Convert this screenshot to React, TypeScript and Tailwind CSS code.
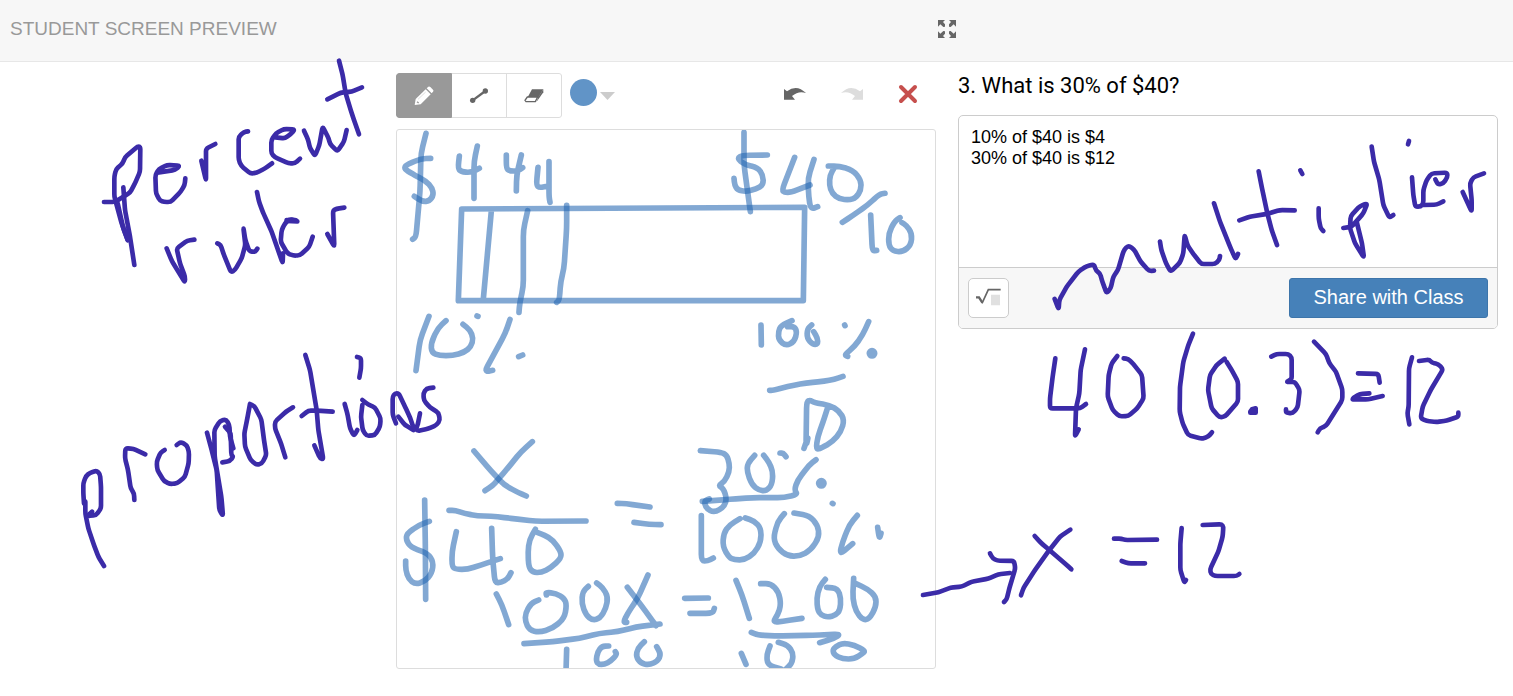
import { useState } from "react";

type Note = {
  x: number;
  y: number;
  strokes: string[];
};

// stroke points are stored at 3x resolution, relative to the corner of each note
const studentNotes: Note[] = [
  {
    x: 396,
    y: 125,
    strokes: [
      "M104 100 75 101 30 120 25 130 40 142 90 168 108 188 113 210 100 228 80 230 55 214",
      "M90 25 75 85 72 200 60 335 50 343",
      "M190 93 186 130 195 140 225 143 250 130M244 63 234 110 234 220",
      "M331 90 331 130 340 138 365 138 380 128M376 90 362 150 361 198",
      "M426 127 421 180 430 188 453 184M459 110 459 215 462 232",
      "M197 252 1226 247 1222 527 187 527ZM286 258 262 522",
      "M395 257 382 315 382 485 371 535 369 562",
      "M512 241 512 310 504 430 494 470 490 525 482 532",
      "M99 574 72 645 60 737",
      "M150 587 125 610 105 655 107 683 130 692 170 692 205 682 225 665 232 640 222 615 201 598",
      "M243 573 246 574",
      "M342 583 328 625 265 741 290 736",
      "M368 695 380 690",
    ],
  },
  {
    x: 666,
    y: 125,
    strokes: [
      "M304 90 230 91 213 100 235 118 275 128 291 150 292 180 270 192 240 200 215 195 206 180 204 160",
      "M234 22 234 120 253 260",
      "M386 97 348 195 355 202 375 202 432 180",
      "M444 103 426 160 428 215 434 253 455 245",
      "M487 123 520 124 560 135 585 165 585 195 570 218 550 225 520 222 498 205 490 180 492 150 505 128",
      "M657 205 640 208 605 240 560 272 529 292",
      "M614 270 619 378 632 376",
      "M702 278 685 290 668 325 668 360 680 378 710 381 735 360 738 325 720 300 708 293",
      "M285 600 286 660",
      "M378 587 345 602 337 620 338 645 360 663 385 650 393 620 385 605 365 605",
      "M437 600 424 612 423 640 440 658 455 658 455 640 443 620",
      "M536 600 537 602",
      "M608 590 590 630 565 665 535 690 545 694",
      "M610 685a8 8 0 1 0 16 0a8 8 0 1 0-16 0",
    ],
  },
  {
    x: 396,
    y: 385,
    strokes: [
      "M234 198 285 258 325 300 365 322 391 333",
      "M409 170 375 200 335 250 305 285 290 302 267 317",
      "M159 376 178 376 205 385 245 393 285 393 345 400 420 409 570 408",
      "M664 355 690 356 762 366",
      "M714 412 760 418 795 419",
      "M100 409 70 420 33 445 30 465 45 487 95 505 112 530 108 565 85 590 58 598 38 582 29 555 29 528",
      "M86 345 88 480 89 643",
      "M181 440 168 500 168 545 180 553 215 553 255 540 313 521M287 430 290 520 297 594 315 592 335 582 345 563",
      "M418 433 400 465 396 500 398 545 410 562 435 563 465 548 495 520 495 500 470 465 445 450 425 443",
      "M301 627 318 660 338 719",
      "M428 645 405 655 388 685 388 710 400 735 430 742 470 730 505 700 512 660 505 640 480 625 450 622 451 630",
      "M577 604 560 620 557 655 570 690 590 706 612 700 630 670 636 635 620 608 602 594",
      "M756 570 725 640 695 685 682 712 692 712",
      "M694 607 735 660 780 722M384 776 470 770 550 760 610 745 665 740 720 726 792 717",
      "M512 793 510 860",
      "M638 783 618 784 605 800 600 828 608 838 625 838 645 828 663 808 658 800",
      "M745 770 725 790 720 815 735 835 760 840 785 828 795 808 782 785",
    ],
  },
  {
    x: 666,
    y: 365,
    strokes: [
      "M311 76 320 76 385 60 420 54 475 49 505 43 531 34",
      "M414 250 428 210 420 245 422 110 432 105 445 113 490 120 520 138 535 165 525 200 500 230 465 250 450 253 455 215 470 175 485 128",
      "M103 257 165 262 182 270 190 295 190 320 175 350 157 362 172 370 182 400 175 425 145 443 120 430 115 408 130 402",
      "M109 409 190 403 260 398 355 398 395 388 385 375 395 345 430 300 450 284",
      "M266 271 245 295 243 320 258 360 280 376 300 378 318 360 321 320 308 290 293 271",
      "M342 264 352 265 360 275",
      "M458 355a8 8 0 1 0 16 0a8 8 0 1 0-16 0",
      "M499 415 501 416",
      "M106 452 106 588 125 588 142 579",
      "M222 461 190 480 173 505 170 545 190 578 205 584 235 585 265 565 285 530 285 490 265 468 238 459",
      "M355 446 335 470 322 520 335 550 365 573 400 574 435 555 460 515 455 480 430 452 384 444",
      "M574 451 550 480 530 530 520 570 560 536",
      "M635 487 640 522 645 505",
      "M56 700 127 699",
      "M72 745 140 745 145 730",
      "M210 646 228 690 250 760",
      "M284 656 315 656 338 680 345 720 335 750 320 772 350 769 408 760",
      "M478 643 460 665 452 700 455 735 465 750 485 757 510 750 522 735 525 700 515 670 482 667",
      "M563 640 560 700 570 740 590 765 610 762 630 725 630 695 605 672 568 655",
      "M256 802 275 810 330 813 440 811 524 807 505 820 461 833",
      "M226 865 240 898",
      "M312 843 302 870 305 900 345 912",
      "M337 832 365 840 382 865 378 895 360 912",
      "M510 845 500 855 505 870 530 882 565 882 590 865 598 858 565 840 530 834 510 845",
    ],
  },
];

const teacherNotes: Note[] = [
  {
    x: 80,
    y: 50,
    strokes: [
      "M72 456 105 456 150 428 165 400 180 365 181 290 172 290 135 322 128 340 108 358 103 380 103 440 125 520 143 570",
      "M130 412 135 480 150 560 163 645M113 460 130 535 143 570",
      "M232 368 285 360 300 347 262 345 237 357 226 375 228 430 240 452 252 456 272 456 302 425 314 405 316 385",
      "M364 332 378 392 378 296 406 282",
      "M504 244 492 246 476 260 476 330 484 348 512 371 530 368 556 355 576 340",
      "M586 262 615 265 632 252 645 238 612 237 588 250 574 270 574 310 585 322 625 340 645 340 660 326",
      "M672 242 684 268 690 294 705 318 718 285 728 230 746 265 750 282 772 304 792 275 800 240",
      "M777 32 788 75 797 130 812 180 822 210 837 253",
      "M742 148 782 128 815 125 846 112",
      "M260 595 275 632 315 698 315 680 300 640 290 595 322 572 343 569",
      "M412 580 422 585 430 610 453 667 465 660 485 625 496 585 490 532 496 570 508 604 525 606 532 596",
      "M531 426 537 455 548 485 575 545 608 640 609 610",
      "M620 510 652 511 628 508 615 520 605 540 602 575 622 610 640 617 660 616 688 590 698 560",
      "M620 513 652 514",
      "M742 552 763 590 759 482 770 476 793 473",
    ],
  },
  {
    x: 60,
    y: 330,
    strokes: [
      "M72 520 70 490 70 460 78 438 90 428 110 422 120 432 123 470 123 535 108 556 82 558 96 545",
      "M76 515 76 550 85 595 100 640 115 680 132 708",
      "M223 510 222 490 212 475 204 420 195 385 196 355 220 356 256 373",
      "M314 360 302 367 290 395 292 420 312 453 330 462 352 460 375 440 386 400 387 365 380 345 362 336 350 345",
      "M441 308 455 360 470 420 478 540 489 558 484 500 464 380 463 300 480 273 498 268 508 285 510 320 520 355",
      "M495 290 512 310 514 375 520 380 510 393 487 397",
      "M570 222 583 228 604 268 612 330 619 375 606 400 590 405 572 390 555 350 553 310 562 265 570 222",
      "M699 232 678 245 645 275 645 295 663 340 676 382",
      "M736 75 750 120 770 240 775 300 790 388 780 385 763 346",
      "M725 258 745 242 775 242 818 245",
      "M854 222 862 250 870 295 882 318 892 300",
      "M891 81 903 84 903 115 898 143",
      "M907 210 925 224 945 232 962 265 960 290 945 315 920 318 908 300 903 260 907 225",
      "M1008 280 998 255 998 200 1005 190 1016 190 1035 230 1050 262 1062 298 1072 290 1080 250",
      "M1015 260 1035 285 1060 300",
      "M1120 173 1100 175 1090 190 1092 212 1110 232 1135 248 1140 270 1130 285 1105 296 1072 303 1060 290",
    ],
  },
  {
    x: 950,
    y: 100,
    strokes: [
      "M314 597 326 628 328 600 350 560 385 515 410 498 432 493 438 512 450 520 457 545 470 580 482 565 490 530 504 510 520 455 528 442 538 438 552 448 572 485 597 513 612 512",
      "M630 425 634 450 648 490 662 515 690 488 700 460 704 404 712 435 730 462 754 492 795 492 808 480 810 468",
      "M792 310 810 365 840 440 857 478 864 462",
    ],
  },
  {
    x: 1230,
    y: 100,
    strokes: [
      "M86 214 95 260 112 340 125 390 141 435",
      "M28 361 60 350 110 342 150 330 194 331",
      "M266 325 266 355 272 385 280 393",
      "M211 211 217 222",
      "M340 384 365 380 400 340 412 310 390 318 362 348 360 385 375 430 402 473 396 430 380 365",
      "M425 140 432 185 448 240 460 315 478 353 490 345",
      "M546 232 550 285 556 320 572 320 580 310 580 270 590 240 605 220 652 218 652 232 640 250 624 254 616 238",
      "M580 315 620 314 640 304",
      "M534 133 537 123",
      "M698 276 725 335 725 300 720 250 730 232 762 220",
    ],
  },
  {
    x: 1030,
    y: 320,
    strokes: [
      "M76 115 68 170 60 235 60 265 150 265 168 252",
      "M165 88 152 150 148 220 138 265 135 350 146 328",
      "M262 108 245 130 236 165 233 230 248 270 268 289 295 288 322 265 341 235 336 165 310 132 295 117 281 115",
      "M489 41 475 75 460 125 450 200 449 275 458 310 474 345 515 356 535 350 546 337",
      "M584 116 560 135 540 165 534 210 545 265 568 292 585 290 624 245 624 185 605 150 590 126",
      "M661 275 666 268 677 265 677 278 661 278ZM664 272H674",
      "M724 110 740 102 775 102 785 112 785 178 768 186 795 186 809 210 803 262 788 280 768 278 768 268",
      "M852 65 888 102 898 130 918 155 937 208 937 240 888 318 870 325 863 337",
      "M984 160 1045 162 1049 188",
      "M968 238 1015 238 1058 228M970 234 990 222 1018 220",
      "M1146 112 1137 145 1136 260 1132 280 1138 313",
      "M1167 123 1198 119 1205 128 1225 132 1239 148 1202 210 1178 260 1172 295 1190 303 1220 306 1250 302 1285 290 1285 278",
    ],
  },
  {
    x: 910,
    y: 500,
    strokes: [
      "M39 285 85 277 122 263 155 260 185 245 235 236 265 223 300 219",
      "M240 160 248 175 262 182 312 183 316 205 298 265 290 298 282 306",
      "M374 108 392 128 418 150 470 195 484 208",
      "M481 89 450 110 418 150 375 210 340 265 333 286",
      "M612 116 635 116 645 120 741 119",
      "M635 183 655 190 705 190",
      "M815 84 811 130 811 210 823 248 828 240",
      "M878 75 935 73 940 80 938 110 925 155 900 208 903 222 915 228 980 228 988 222",
    ],
  },
];

// rounds the joints of a pen stroke, closed shapes and dots stay as they are
const soften = (d: string, reach: number) => {
  if (/[aHZ]/.test(d)) return d;

  return d.split("M").filter(Boolean).map((part) => {
    const n = part.trim().split(/\s+/).map(Number);
    const points: number[][] = [];
    for (let i = 0; i < n.length; i += 2) points.push([n[i], n[i + 1]]);

    let out = `M${points[0].join(" ")}`;
    for (let i = 1; i < points.length - 1; i++) {
      const [x, y] = points[i];
      const toward = ([px, py]: number[]) => {
        const length = Math.hypot(px - x, py - y) || 1;
        const t = Math.min(0.5, reach / length);
        return `${x + (px - x) * t} ${y + (py - y) * t}`;
      };
      out += `L${toward(points[i - 1])}Q${x} ${y} ${toward(points[i + 1])}`;
    }
    return `${out}L${points[points.length - 1].join(" ")}`;
  }).join("");
};

function Ink({ notes, reach }: { notes: Note[], reach: number }) {
  return (
    <>
      {notes.map((note) => (
        <g key={`${note.x}-${note.y}`} transform={`translate(${note.x} ${note.y}) scale(${1 / 3})`}>
          {note.strokes.map((d) => <path key={d} d={soften(d, reach)} />)}
        </g>
      ))}
    </>
  );
}

function ExpandIcon() {
  return (
    <svg className="w-[18px] h-[18px]" viewBox="0 0 54 54" fill="#666">
      <path d="M0 0H21L15 6 21 13V20L16 21 7 13 0 20Z" />
      <path d="M54 0H33L39 6 33 13V20L38 21 47 13 54 20Z" />
      <path d="M0 54H21L15 48 21 41V34L16 33 7 41 0 34Z" />
      <path d="M54 54H33L39 48 33 41V34L38 33 47 41 54 34Z" />
    </svg>
  );
}

function PencilIcon() {
  return (
    <svg className="w-5 h-5" viewBox="0 0 60 60" fill="#fff">
      <path d="M2 57 5 39 35 10 50 25 20 55Z" />
      <path d="M38 7 43 2Q46 0 49 3L57 11Q60 14 57 17L53 22Z" />
      <path d="M12 40 35 18" stroke="#ccc" strokeWidth="2" />
      <path d="M9 47 14 51" stroke="#999" strokeWidth="4" />
    </svg>
  );
}

function LineIcon() {
  return (
    <svg className="w-5 h-5" viewBox="0 0 60 60" fill="#666">
      <path d="M11 43 49 15" stroke="#666" strokeWidth="7" />
      <circle cx="11" cy="43" r="8" />
      <circle cx="49" cy="15" r="8" />
    </svg>
  );
}

function EraserIcon() {
  return (
    <svg className="w-5 h-5" viewBox="0 0 60 60" fill="#666">
      <path d="M24 10H58L43 34H11Z" />
      <path d="M10 33H41L34 47H6L3 43Z" fill="#fff" stroke="#666" strokeWidth="4" />
      <path d="M42 34 58 10V19L38 47Z" />
    </svg>
  );
}

function UndoIcon({ flip }: { flip?: boolean }) {
  return (
    <svg className={flip ? "w-[22px] h-[14px] -scale-x-100" : "w-[22px] h-[14px]"} viewBox="0 0 66 42" fill={flip ? "#ddd" : "#666"}>
      <path d="M0 6 9 13Q38-10 66 18 44 10 24 27L33 38H0Z" />
    </svg>
  );
}

function App() {
  const [tool, setTool] = useState<string>("pencil");
  const [answer, setAnswer] = useState<string>("10% of $40 is $4\n30% of $40 is $12");

  const tools = [
    { name: "pencil", icon: <PencilIcon /> },
    { name: "line", icon: <LineIcon /> },
    { name: "eraser", icon: <EraserIcon /> },
  ];

  return (
    <div className="relative min-h-screen bg-white overflow-hidden font-['Liberation_Sans',Arial,sans-serif] text-black">
      <header className="flex items-center h-[62px] pb-1 bg-[#f7f7f7] border-b border-[#e7e7e7]">
        <h1 className="flex-1 pl-[10px] text-[19px] leading-6 text-[#999]">STUDENT SCREEN PREVIEW</h1>
        <div className="w-[575px]">
          <button className="block" aria-label="Full screen">
            <ExpandIcon />
          </button>
        </div>
      </header>

      <main className="grid grid-cols-[1fr_540px_540px] gap-x-[22px] pt-[11px] pr-[15px] pb-[27px]">
        <section className="col-start-2">
          <div className="flex items-center justify-between h-[45px]">
            <div className="flex items-center">
              <div className="flex h-[45px] w-[166px] rounded-[3px] overflow-hidden">
                {tools.map(({ name, icon }) => (
                  <button
                    key={name}
                    aria-label={name}
                    className={name === tool
                      ? "flex-1 flex justify-center items-center bg-[#999] border border-[#999] first:rounded-l-[3px] last:rounded-r-[3px]"
                      : "flex-1 flex justify-center items-center border-y border-r border-[#ddd] first:border-l first:rounded-l-[3px] last:rounded-r-[3px]"}
                    onClick={() => setTool(name)}
                  >
                    {icon}
                  </button>
                ))}
              </div>
              <button className="flex items-center ml-2 mb-[6px]" aria-label="Pen color">
                <span className="w-[27px] h-[27px] rounded-full bg-[#6194c7]" />
                <svg className="w-[15px] h-2 ml-[3px] mt-[6px]" viewBox="0 0 30 16" fill="#ccc">
                  <path d="M0 0H30L15 16Z" />
                </svg>
              </button>
            </div>
            <div className="flex items-center gap-[35px] pr-[18px] pb-1">
              <button aria-label="Undo"><UndoIcon /></button>
              <button aria-label="Redo"><UndoIcon flip /></button>
              <button aria-label="Clear">
                <svg className="w-[20px] h-[20px]" viewBox="0 0 60 60" stroke="#c64f4d" strokeWidth="12" strokeLinecap="round">
                  <path d="M9 9 51 51M51 9 9 51" />
                </svg>
              </button>
            </div>
          </div>
          <div className="mt-[11px] border border-[#ddd] rounded-[3px]">
            <svg
              className="block w-full"
              viewBox="397 130 538 538"
              fill="none"
              stroke="rgb(32 100 176 / 0.56)"
              strokeWidth="17"
              strokeLinecap="round"
              strokeLinejoin="round"
              role="img"
              aria-label="Student drawing"
            >
              <Ink notes={studentNotes} reach={20} />
            </svg>
          </div>
        </section>

        <section>
          <label htmlFor="answer" className="block font-[Roboto,sans-serif] text-[22px] leading-[26px]">3. What is 30% of $40?</label>
          <div className="mt-4 border border-[#ccc] rounded-[5px] overflow-hidden">
            <textarea
              id="answer"
              className="block w-full h-[151px] px-3 py-[11px] text-[18px] leading-[21px] resize-none outline-none"
              value={answer}
              onChange={(e) => setAnswer(e.target.value)}
            />
            <div className="flex justify-between items-center h-[61px] px-[9px] pb-px bg-[#f7f7f7] border-t border-[#ccc]">
              <button className="flex justify-center items-center w-[41px] h-10 pb-0.5 bg-white border border-[#ccc] rounded-[5px]" aria-label="Insert math">
                <svg className="w-[25px] h-[18px]" viewBox="0 0 75 54" fill="none" stroke="#666">
                  <path d="M45 20H72V52H45Z" fill="#e0e0e0" stroke="none" />
                  <path d="M0 28H9L19 44" strokeWidth="7" />
                  <path d="M18 46 37 5H74" strokeWidth="5" />
                </svg>
              </button>
              <button className="w-[199px] h-10 pb-0.5 bg-[#4681b9] border border-[#3d75aa] rounded-[3px] text-[20px] text-white">
                Share with Class
              </button>
            </div>
          </div>
        </section>
      </main>

      {/* teacher's pen marks over the whole screen */}
      <svg
        className="absolute top-0 left-0 w-[1513px] h-[696px] pointer-events-none"
        viewBox="0 0 1513 696"
        fill="none"
        stroke="#3b2ba8"
        strokeWidth="14"
        strokeLinecap="round"
        strokeLinejoin="round"
        role="img"
        aria-label="Teacher annotations"
      >
        <Ink notes={teacherNotes} reach={8} />
      </svg>
    </div>
  );
}

export default App;
